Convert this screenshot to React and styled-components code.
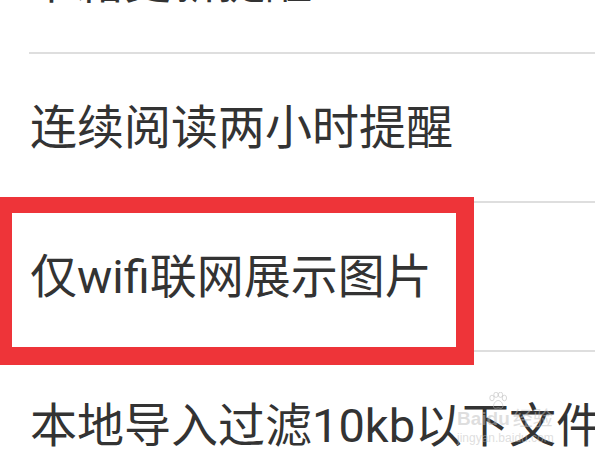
import React from 'react';
import styled, { createGlobalStyle } from 'styled-components';

const GlobalStyle = createGlobalStyle`
    html, body {
        margin: 0;
        padding: 0;
        background: #ffffff;
    }
    body {
        font-family: Roboto, "Noto Sans CJK SC", sans-serif;
    }
`;

const Page = styled.div`
    position: relative;
    width: 595px;
    height: 458px;
    overflow: hidden;
    background: #ffffff;
`;

const List = styled.div`
    margin-top: ${(p) => p.offset}px;
    display: flex;
    flex-direction: column;
`;

const Row = styled.div`
    height: ${(p) => p.height}px;
    margin-left: 29px;
    border-bottom: 2px solid #dedede;
    display: flex;
    align-items: center;
`;

const Label = styled.span`
    margin-left: 1px;
    font-size: 47px;
    line-height: 1;
    color: #333333;
    white-space: nowrap;
`;

// annotation drawn over the screenshot
const Highlight = styled.div`
    position: absolute;
    left: 0;
    top: 197px;
    width: 444px;
    height: 134px;
    border-style: solid;
    border-color: #ee3439;
    border-width: 16px 18px 18px 12px;
`;

const Watermark = styled.div`
    position: absolute;
    left: 457px;
    top: 392px;
    display: flex;
    flex-direction: column;
    align-items: flex-start;
    color: rgba(190, 190, 190, 0.5);
    pointer-events: none;
`;

const MarkTitle = styled.div`
    display: flex;
    align-items: flex-end;
    font-family: "Liberation Sans", Arial, sans-serif;
    font-size: 19px;
    font-weight: bold;
    line-height: 1;
`;

const MarkDu = styled.span`
    display: flex;
    flex-direction: column;
    align-items: center;
    margin-right: 3px;
`;

const MarkCn = styled.span`
    font-family: "Noto Sans CJK SC", sans-serif;
    font-size: 20px;
    font-weight: normal;
`;

const MarkUrl = styled.div`
    margin-top: 4px;
    font-family: "Liberation Sans", Arial, sans-serif;
    font-size: 12px;
    line-height: 1;
`;

const Paw = () => (
    <svg width="20" height="17" viewBox="0 0 20 17" fill="none" stroke="rgba(190,190,190,0.6)" strokeWidth="1">
        <ellipse cx="4" cy="6" rx="2.2" ry="2.8" />
        <ellipse cx="8" cy="2.8" rx="2.2" ry="2.6" />
        <ellipse cx="12.5" cy="2.8" rx="2.2" ry="2.6" />
        <ellipse cx="16.4" cy="6" rx="2.2" ry="2.8" />
        <path d="M5.5 14.5c0-3 2.2-6 4.7-6s4.7 3 4.7 6c0 1.6-1.6 2-3 1.6-1-.3-2.4-.3-3.4 0-1.4.4-3 0-3-1.6z" />
    </svg>
);

const rows = [
    { text: '书籍更新提醒', height: 142 },
    { text: '连续阅读两小时提醒', height: 147 },
    { text: '仅wifi联网展示图片', height: 147 },
    { text: '本地导入过滤10kb以下文件', height: 147 },
];

const App = () => {
    return (
        <Page>
            <GlobalStyle />
            <List offset={-90}>
                {rows.map((r) => (
                    <Row key={r.text} height={r.height}>
                        <Label>{r.text}</Label>
                    </Row>
                ))}
            </List>
            <Highlight />
            <Watermark>
                <MarkTitle>
                    Bai
                    <MarkDu>
                        <Paw />
                        du
                    </MarkDu>
                    <MarkCn>经验</MarkCn>
                </MarkTitle>
                <MarkUrl>jingyan.baidu.com</MarkUrl>
            </Watermark>
        </Page>
    );
};

export default App;
